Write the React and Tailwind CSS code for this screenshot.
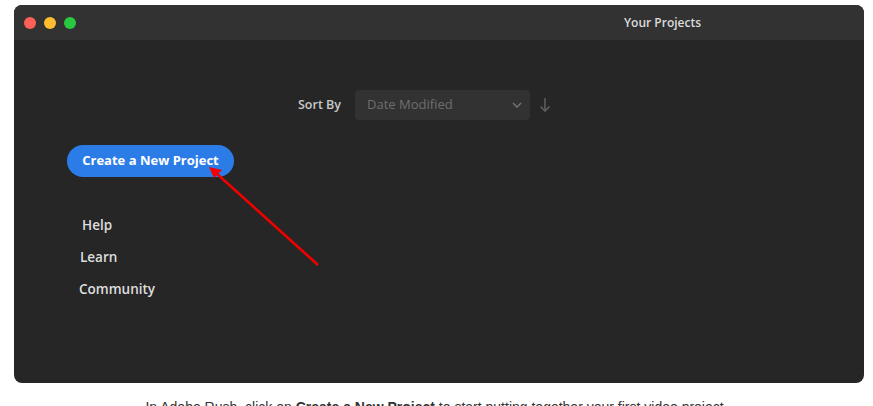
import React from "react";

const links = [
    { label: "Help", indent: "ml-[3px]" },
    { label: "Learn", indent: "ml-[1px]" },
    { label: "Community", indent: "ml-0" },
];

const TrafficLights = () => (
    <div className="flex items-center gap-[8px]">
        <span className="w-[12px] h-[12px] rounded-full bg-[#fe5f57]" />
        <span className="w-[12px] h-[12px] rounded-full bg-[#febc2e]" />
        <span className="w-[12px] h-[12px] rounded-full bg-[#28c840]" />
    </div>
);

const App = () => {
    return (
        <div className="w-[873px] h-[406px] bg-white overflow-hidden font-['Open_Sans',sans-serif]">
            {/* Window */}
            <div className="relative ml-[14px] mt-[5px] w-[850px] h-[378px] rounded-[8px] overflow-hidden bg-[#262626]">
                {/* Title bar */}
                <div className="h-[35px] bg-[#323232] flex items-center pl-[10px]">
                    <TrafficLights />
                    <span className="ml-[548px] text-[12px] font-semibold text-[#dcdcdc]">Your Projects</span>
                </div>

                {/* Body */}
                <div className="pt-[50px]">
                    <div className="flex items-center pl-[284px]">
                        <span className="text-[12.5px] font-semibold text-[#c8c8c8]">Sort By</span>
                        <div className="ml-[14px] w-[175px] h-[30px] rounded-[4px] bg-[#323232] flex items-center justify-between pl-[12px] pr-[6px]">
                            <span className="text-[13px] text-[#6e6e6e]">Date Modified</span>
                            <svg width="14" height="14" viewBox="0 0 14 14" fill="none" stroke="#6e6e6e" strokeWidth="1.6">
                                <path d="M3 5l4 4 4-4" />
                            </svg>
                        </div>
                        <svg className="ml-[8px]" width="14" height="18" viewBox="0 0 14 18" fill="none" stroke="#5c5c5c" strokeWidth="1.6">
                            <path d="M7 2v13M2.5 10.5L7 15l4.5-4.5" />
                        </svg>
                    </div>

                    <button className="mt-[25px] ml-[53px] w-[167px] h-[32px] rounded-full bg-[#2c7ce8] text-white text-[13px] font-bold">
                        Create a New Project
                    </button>

                    <div className="mt-[38px] ml-[65px] flex flex-col gap-[12px]">
                        {links.map((l) => (
                            <span key={l.label} className={`${l.indent} h-[20px] leading-[20px] text-[13.5px] font-semibold text-[#dedede]`}>
                                {l.label}
                            </span>
                        ))}
                    </div>
                </div>

                {/* Annotation arrow */}
                <svg className="absolute left-0 top-0 pointer-events-none" width="850" height="378">
                    <line x1="304" y1="260" x2="202" y2="168" stroke="#f20000" strokeWidth="2.6" />
                    <polygon points="195,162 208,165 200,173" fill="#f20000" />
                </svg>
            </div>

            {/* Caption */}
            <p className="mt-[14px] text-center text-[14px] leading-[20px] text-[#333] font-['Liberation_Sans',Arial,sans-serif]">
                In Adobe Rush, click on <b>Create a New Project</b> to start putting together your first video project.
            </p>
        </div>
    );
};

export default App;
